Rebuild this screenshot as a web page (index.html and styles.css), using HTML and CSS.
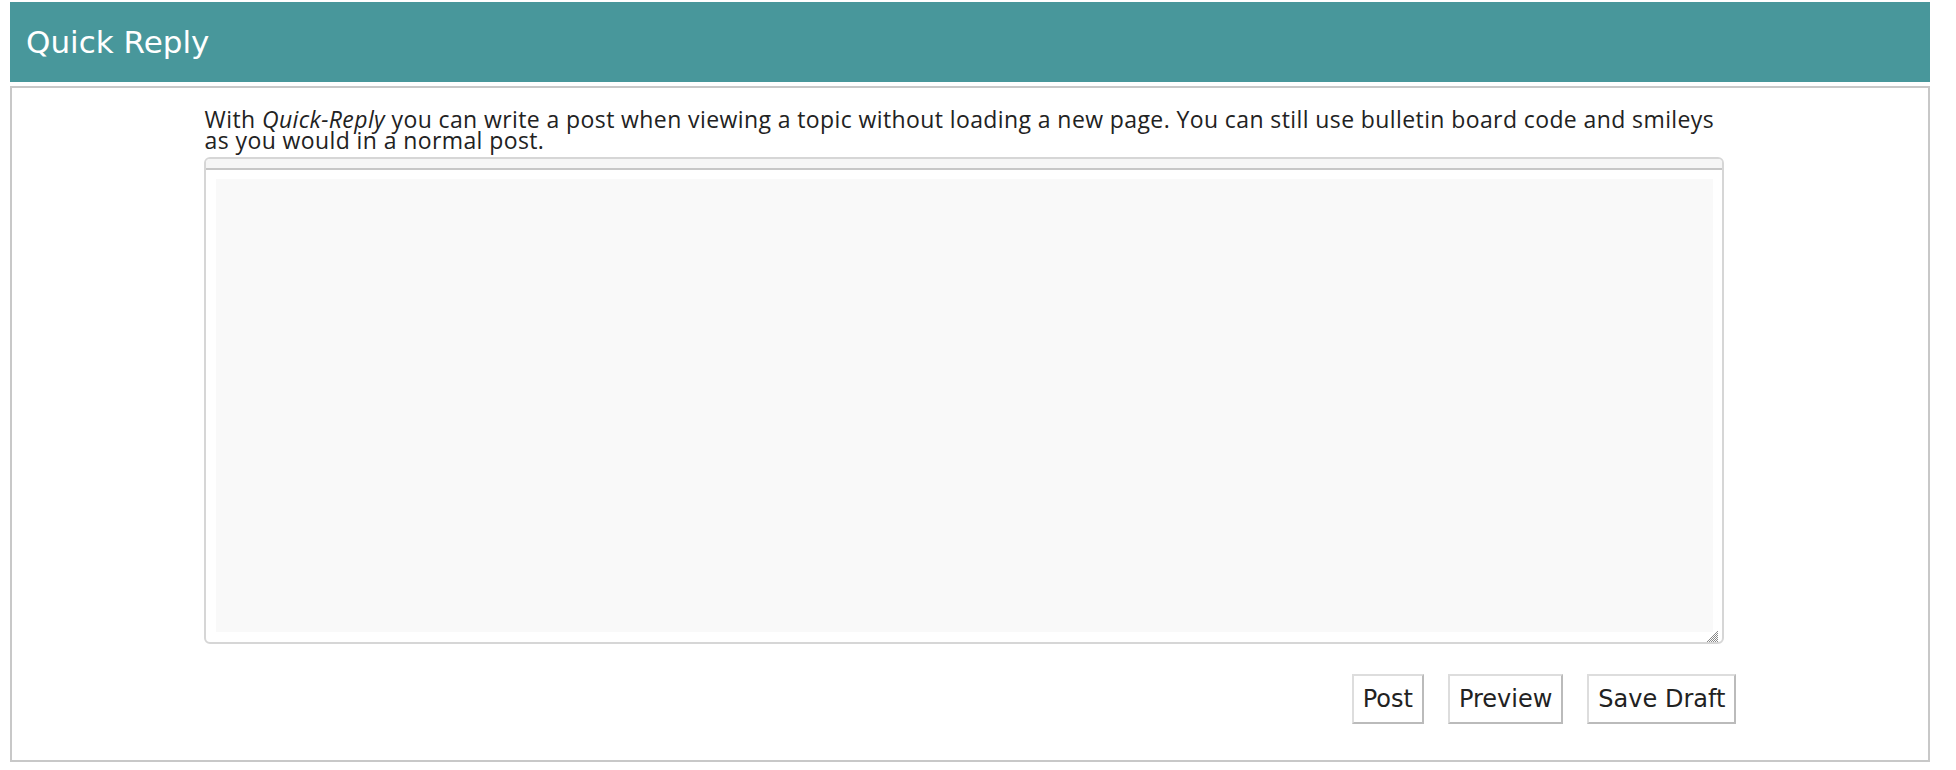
FILE: index.html
```html
<!DOCTYPE html>
<html lang="en">
<head>
<meta charset="utf-8">
<title>Quick Reply</title>
<link rel="stylesheet" href="styles.css">
</head>
<body>
<div class="page">
  <div class="panel-head"><h2 class="panel-title">Quick Reply</h2></div>
  <div class="panel-body">
    <div class="qr">
      <p class="intro">With <em>Quick-Reply</em> you can write a post when viewing a topic without loading a new page. You can still use bulletin board code and smileys<br>as you would in a normal post.</p>
      <div class="editor">
        <div class="toolbar"></div>
        <div class="editor-area">
          <textarea class="input" aria-label="Message"></textarea>
          <svg class="grip" width="12" height="12" viewBox="0 0 12 12" aria-hidden="true">
            <defs>
              <pattern id="dots" width="2" height="2" patternUnits="userSpaceOnUse">
                <rect x="0" y="0" width="1" height="1" fill="#8a8a8a"/>
                <rect x="1" y="1" width="1" height="1" fill="#8a8a8a"/>
              </pattern>
            </defs>
            <polygon points="12,0 12,12 0,12" fill="url(#dots)"/>
          </svg>
        </div>
      </div>
      <div class="actions">
        <button class="btn" type="button">Post</button>
        <button class="btn" type="button">Preview</button>
        <button class="btn" type="button">Save Draft</button>
      </div>
    </div>
  </div>
</div>
</body>
</html>
```

FILE: styles.css
```css
html, body {
  margin: 0;
  padding: 0;
  background: #ffffff;
}

.page {
  padding: 2px 26px 0 10px;
}

.panel-head {
  height: 80px;
  background: #48979b;
  display: flex;
  align-items: center;
  padding-left: 16px;
}

.panel-title {
  margin: 0;
  font-family: "DejaVu Sans", Verdana, sans-serif;
  font-weight: normal;
  font-size: 31px;
  line-height: 36px;
  color: #ffffff;
}

.panel-body {
  margin-top: 4px;
  border: 2px solid #c8c8c8;
  padding: 21px 0 36px 0;
}

.qr {
  width: 80%;
  margin: 0 auto;
}

.intro {
  margin: 0 0 6px 0;
  padding-left: 1px;
  font-family: "Open Sans", "Noto Sans", sans-serif;
  font-size: 23px;
  letter-spacing: 0.4px;
  line-height: 21px;
  color: #222222;
  white-space: nowrap;
}

.intro em {
  font-style: italic;
}

.editor {
  width: calc(100% - 16px);
  border: 2px solid #d6d6d6;
  border-radius: 6px;
  background: #ffffff;
  overflow: hidden;
}

.toolbar {
  height: 9px;
  background: #f5f5f5;
  border-bottom: 2px solid #c6c6c6;
}

.editor-area {
  position: relative;
  padding: 9px 9px 10px 10px;
}

.input {
  display: block;
  box-sizing: border-box;
  width: 100%;
  height: 453px;
  margin: 0;
  padding: 0;
  border: none;
  outline: none;
  resize: none;
  background: #f9f9f9;
}

.grip {
  position: absolute;
  right: 4px;
  bottom: 0;
  display: block;
}

.actions {
  margin-top: 30px;
  display: flex;
  justify-content: flex-end;
  gap: 24px;
}

.btn {
  font-family: "DejaVu Sans", Verdana, sans-serif;
  font-size: 24px;
  line-height: 26px;
  color: #222222;
  background: #ffffff;
  border: 2px solid;
  border-color: #dddddd #bbbbbb #bbbbbb #dddddd;
  border-radius: 0;
  padding: 10px 9px;
  margin: 0;
  cursor: pointer;
}
```
